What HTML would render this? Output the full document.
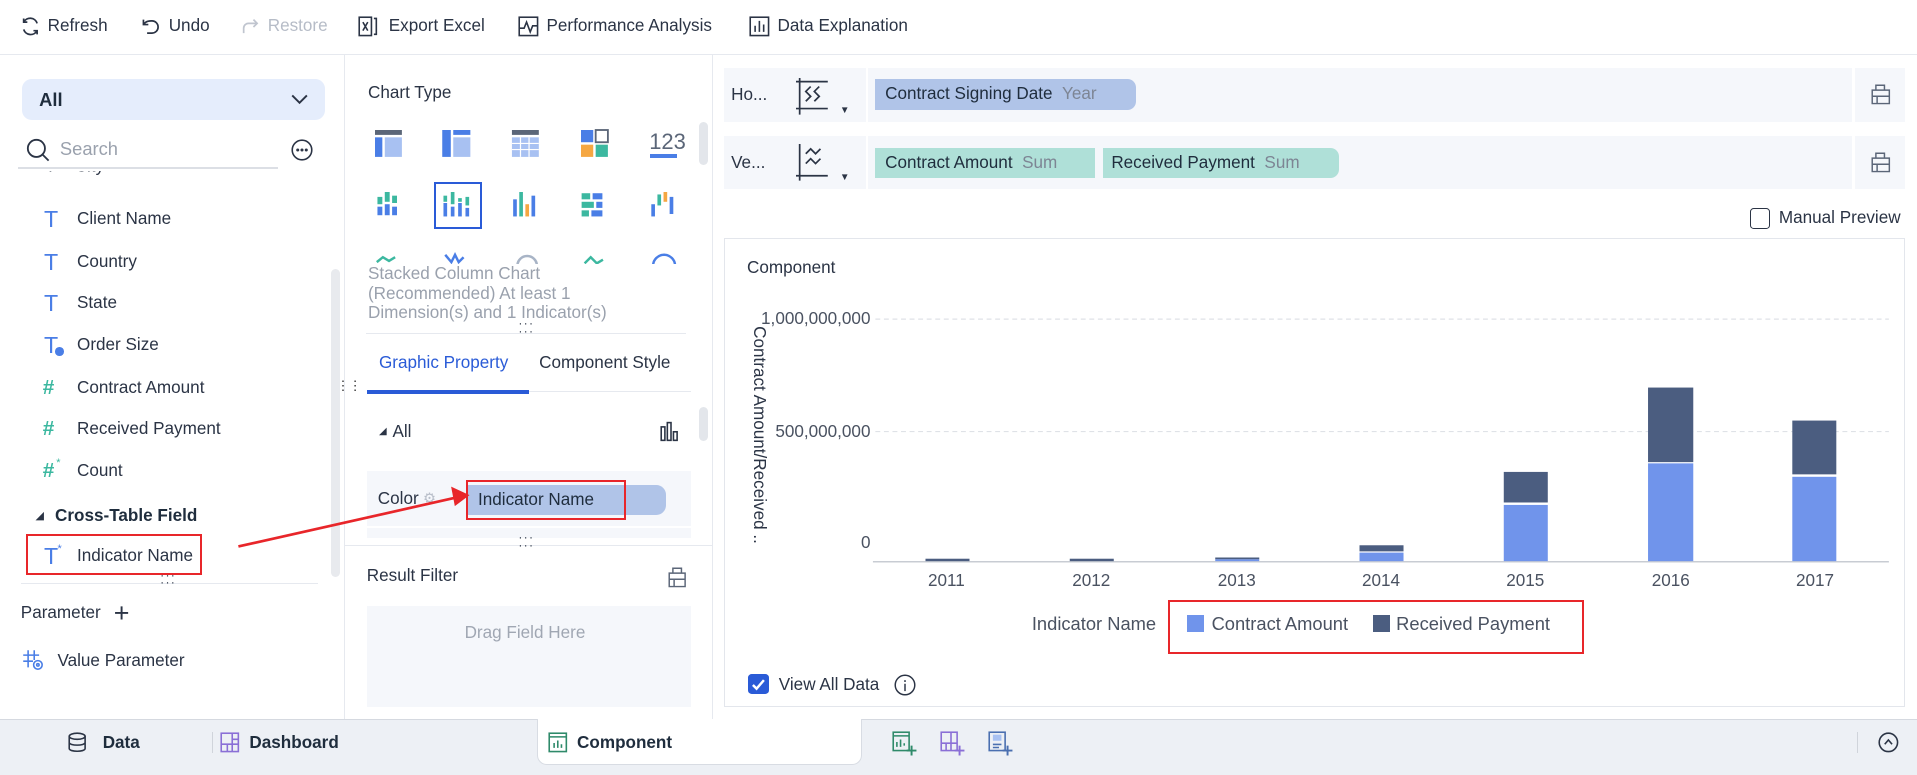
<!DOCTYPE html>
<html><head><meta charset="utf-8"><style>
*{box-sizing:border-box;margin:0;padding:0}
html,body{width:1917px;height:775px;overflow:hidden;background:#fff}
#w{zoom:1.22258;width:1568px;height:634px;position:relative;font-family:"Liberation Sans",sans-serif;font-size:14px;color:#2b3445}
.a{position:absolute;white-space:nowrap}
.t{line-height:18px;transform:translateY(-9px)}
svg{position:absolute;overflow:visible}
.gray{color:#8a93a3}
</style></head><body><div id="w">
<!-- toolbar -->
<div class="a" style="left:0;top:44px;width:1568px;height:1px;background:#e6e9ef"></div>
<svg style="left:16px;top:13px" width="17" height="17" viewBox="0 0 17 17" fill="none" stroke="#2b3445" stroke-width="1.4"><path d="M14 6A6 6 0 0 0 3 5M3 2v3h3M3 11a6 6 0 0 0 11 1M14 15v-3h-3"/></svg>
<div class="a t" style="left:39px;top:21px">Refresh</div>
<svg style="left:115px;top:13px" width="17" height="17" viewBox="0 0 17 17" fill="none" stroke="#2b3445" stroke-width="1.4"><path d="M2 3v4h4M2 7c2-3 5-3 7-3a5 5 0 0 1 0 10H5"/></svg>
<div class="a t" style="left:138px;top:21px">Undo</div>
<svg style="left:196px;top:13px" width="17" height="17" viewBox="0 0 17 17" fill="none" stroke="#c0c5cf" stroke-width="1.4"><path d="M11 3l3 3-3 3M14 6H7a4 4 0 0 0-4 4v4"/></svg>
<div class="a t" style="left:219px;top:21px;color:#b6bcc7">Restore</div>
<svg style="left:293px;top:13px" width="16" height="17" viewBox="0 0 16 17" fill="none" stroke="#2b3445" stroke-width="1.3"><rect x="1" y="1" width="10" height="15"/><path d="M13 2h2v13h-2M4 5l4 7M8 5l-4 7"/></svg>
<div class="a t" style="left:318px;top:21px">Export Excel</div>
<svg style="left:424px;top:13px" width="17" height="17" viewBox="0 0 17 17" fill="none" stroke="#2b3445" stroke-width="1.3"><rect x="1" y="1" width="15" height="15"/><path d="M1 10l4 0 2-5 3 8 2-5 4 0"/></svg>
<div class="a t" style="left:447px;top:21px">Performance Analysis</div>
<svg style="left:613px;top:13px" width="17" height="17" viewBox="0 0 17 17" fill="none" stroke="#2b3445" stroke-width="1.3"><rect x="1" y="1" width="15" height="15"/><path d="M5 13V8M8.5 13V4M12 13V7"/></svg>
<div class="a t" style="left:636px;top:21px">Data Explanation</div>

<!-- left panel -->
<div class="a" style="left:281px;top:45px;width:1px;height:543px;background:#e6e9ef"></div>
<div class="a" style="left:18px;top:65px;width:248px;height:33px;background:#e5edfc;border-radius:8px"></div>
<div class="a t" style="left:32px;top:82px;font-weight:bold;font-size:15px;color:#1f2d3d">All</div>
<svg style="left:238px;top:76px" width="14" height="10" viewBox="0 0 14 10" fill="none" stroke="#2b3445" stroke-width="1.6"><path d="M1 2l6 6 6-6"/></svg>
<svg style="left:21px;top:113px" width="20" height="20" viewBox="0 0 20 20" fill="none" stroke="#2b3445" stroke-width="1.5"><circle cx="8.5" cy="8.5" r="7"/><path d="M13.5 13.5l5 5"/></svg>
<div class="a t gray" style="left:49px;top:122px;font-size:15px;color:#9aa1ad">Search</div>
<div class="a" style="left:15px;top:137px;width:212px;height:1px;background:#dcdfe5"></div>
<svg style="left:238px;top:114px" width="18" height="18" viewBox="0 0 18 18" fill="none" stroke="#2b3445" stroke-width="1.3"><circle cx="9" cy="9" r="8"/><circle cx="5.5" cy="9" r=".6" fill="#2b3445"/><circle cx="9" cy="9" r=".6" fill="#2b3445"/><circle cx="12.5" cy="9" r=".6" fill="#2b3445"/></svg>
<div class="a" style="left:37px;top:140px;width:140px;height:8px;overflow:hidden"><div style="color:#2b3445;font-size:14px;transform:translateY(-12px)">T&nbsp;&nbsp;&nbsp;&nbsp;City</div></div>
<div class="a" style="left:271px;top:220px;width:7px;height:252px;background:#e8eaee;border-radius:4px"></div>
<div class="a t" style="left:275px;top:316px;font-size:11px;letter-spacing:-1px;color:#333">⋮⋮</div>
<!-- fields -->
<div class="a t" style="left:36px;top:179px;color:#4a7ee6;font-size:19px">T</div><div class="a t" style="left:63px;top:179px">Client Name</div>
<div class="a t" style="left:36px;top:214px;color:#4a7ee6;font-size:19px">T</div><div class="a t" style="left:63px;top:214px">Country</div>
<div class="a t" style="left:36px;top:248px;color:#4a7ee6;font-size:19px">T</div><div class="a t" style="left:63px;top:248px">State</div>
<div class="a t" style="left:36px;top:282px;color:#4a7ee6;font-size:19px">T</div><div class="a" style="left:45px;top:284px;width:7px;height:7px;border-radius:50%;background:#4a7ee6"></div><div class="a t" style="left:63px;top:282px">Order Size</div>
<div class="a t" style="left:35px;top:317px;color:#3cb8a0;font-size:17px;font-weight:bold">#</div><div class="a t" style="left:63px;top:317px">Contract Amount</div>
<div class="a t" style="left:35px;top:351px;color:#3cb8a0;font-size:17px;font-weight:bold">#</div><div class="a t" style="left:63px;top:351px">Received Payment</div>
<div class="a t" style="left:35px;top:385px;color:#3cb8a0;font-size:17px;font-weight:bold">#</div><div class="a t" style="left:46px;top:379px;color:#3cb8a0;font-size:9px">*</div><div class="a t" style="left:63px;top:385px">Count</div>
<div class="a t" style="left:29px;top:422px;font-size:9px">◢</div>
<div class="a t" style="left:45px;top:422px;font-weight:bold;color:#1f2d3d">Cross-Table Field</div>
<div class="a t" style="left:36px;top:455px;color:#4a7ee6;font-size:19px">T</div><div class="a t" style="left:47px;top:449px;color:#4a7ee6;font-size:9px">*</div>
<div class="a t" style="left:63px;top:455px">Indicator Name</div>
<div class="a" style="left:21px;top:437px;width:144px;height:33px;border:2px solid #e8262a"></div>
<div class="a" style="left:17px;top:477px;width:243px;height:1px;background:#e6e9ef"></div>
<div class="a t" style="left:131px;top:477px;font-size:10px;line-height:6px;letter-spacing:1px">···<br>···</div>
<div class="a t" style="left:17px;top:501px">Parameter</div>
<div class="a t" style="left:93px;top:501px;font-size:22px;font-weight:300">+</div>
<svg style="left:18px;top:531px" width="18" height="18" viewBox="0 0 18 18" fill="none" stroke="#4a7ee6" stroke-width="1.3"><path d="M5 1v14M10 1v8M1 5h13M1 10h8"/><circle cx="13" cy="13" r="3.5"/><circle cx="13" cy="13" r="1"/></svg>
<div class="a t" style="left:47px;top:541px">Value Parameter</div>

<!-- middle panel -->
<div class="a" style="left:582px;top:45px;width:1px;height:543px;background:#e6e9ef"></div>
<div class="a t" style="left:301px;top:76px">Chart Type</div>
<div class="a" style="left:572px;top:100px;width:7px;height:35px;background:#e3e6eb;border-radius:4px"></div>
<!-- row1 -->
<svg style="left:307px;top:106px" width="180" height="24">
<rect x="0" y="0" width="22" height="4" fill="#5b6678"/><rect x="0" y="6" width="6" height="16" fill="#4a7ee6"/><rect x="8" y="6" width="14" height="16" fill="#a8c1f2"/>
<rect x="55" y="0" width="7" height="22" fill="#4a7ee6"/><rect x="64" y="0" width="14" height="4" fill="#4a7ee6"/><rect x="64" y="6" width="14" height="16" fill="#a8c1f2"/>
<rect x="112" y="0" width="22" height="4" fill="#5b6678"/><rect x="112" y="6" width="22" height="16" fill="#a8c1f2"/><path d="M112 11h22M112 16h22M119 6v16M126 6v16" stroke="#fff"/>
</svg>
<svg style="left:475px;top:106px" width="24" height="24"><rect x="0" y="0" width="10" height="10" fill="#4a7ee6"/><rect x="12" y="0" width="10" height="10" fill="none" stroke="#5b6678" stroke-width="1.5"/><rect x="0" y="12" width="10" height="10" fill="#f5a742"/><rect x="12" y="12" width="10" height="10" fill="#3cb8a0"/></svg>
<div class="a t" style="left:531px;top:116px;font-size:18px;color:#5b6678">123</div>
<div class="a" style="left:532px;top:126px;width:22px;height:3px;background:#4a7ee6"></div>
<!-- row2 -->
<svg style="left:307px;top:157px" width="240" height="24">
<g fill="#4a7ee6"><rect x="2" y="12" width="4" height="7"/><rect x="8" y="10" width="4" height="9"/><rect x="14" y="12" width="4" height="7"/></g>
<g fill="#3cb8a0"><rect x="2" y="4" width="4" height="6"/><rect x="8" y="0" width="4" height="8"/><rect x="14" y="3" width="4" height="6"/></g>
<g fill="#4a7ee6"><rect x="56" y="9" width="3" height="11"/><rect x="62" y="12" width="3" height="8"/><rect x="68" y="9" width="3" height="11"/><rect x="74" y="13" width="3" height="7"/></g>
<g fill="#3cb8a0"><rect x="56" y="3" width="3" height="5"/><rect x="62" y="0" width="3" height="10"/><rect x="68" y="5" width="3" height="3"/><rect x="74" y="4" width="3" height="7"/></g>
<rect x="113" y="6" width="3" height="14" fill="#4a7ee6"/><rect x="118" y="0" width="3" height="20" fill="#3cb8a0"/><rect x="123" y="10" width="3" height="10" fill="#f5a742"/><rect x="128" y="3" width="3" height="17" fill="#4a7ee6"/>
<g fill="#3cb8a0"><rect x="169" y="1" width="7" height="5"/><rect x="169" y="8" width="10" height="5"/><rect x="169" y="15" width="6" height="5"/></g><g fill="#4a7ee6"><rect x="178" y="1" width="8" height="5"/><rect x="181" y="8" width="5" height="5"/><rect x="177" y="15" width="9" height="5"/></g>
<rect x="226" y="10" width="3" height="10" fill="#4a7ee6"/><rect x="231" y="2" width="3" height="9" fill="#3cb8a0"/><rect x="236" y="0" width="3" height="8" fill="#f5a742"/><rect x="241" y="4" width="3" height="14" fill="#4a7ee6"/>
</svg>
<div class="a" style="left:355px;top:149px;width:39px;height:38px;border:2px solid #2a5bd7"></div>
<!-- row3 partial -->
<div class="a" style="left:300px;top:200px;width:265px;height:16px;overflow:hidden">
<svg style="left:0;top:0" width="265" height="20" fill="none" stroke-width="2">
<path d="M8 14l5-4 5 3 5-3" stroke="#3cb8a0"/><path d="M64 8l5 6 3-6 3 6 4-4" stroke="#4a7ee6"/><circle cx="131" cy="17" r="8" stroke="#a8b4c6"/><path d="M178 15l5-5 5 5 5-3" stroke="#3cb8a0"/><path d="M234 17a9 9 0 0 1 18 0" stroke="#4a7ee6"/></svg></div>
<div class="a" style="left:301px;top:216px;font-size:14px;line-height:16px;color:#9aa1ad;white-space:normal;width:215px">Stacked Column Chart (Recommended) At least 1 Dimension(s) and 1 Indicator(s)</div>
<div class="a" style="left:299px;top:272px;width:262px;height:1px;background:#e6e9ef"></div>
<div class="a t" style="left:424px;top:271px;font-size:10px;line-height:6px;letter-spacing:1px">···<br>···</div>
<div class="a t" style="left:310px;top:297px;color:#2a5bd7">Graphic Property</div>
<div class="a t" style="left:441px;top:297px">Component Style</div>
<div class="a" style="left:300px;top:320px;width:265px;height:1px;background:#e6e9ef"></div>
<div class="a" style="left:300px;top:319px;width:133px;height:3px;background:#2a5bd7"></div>
<div class="a" style="left:572px;top:333px;width:7px;height:28px;background:#e3e6eb;border-radius:4px"></div>
<div class="a t" style="left:310px;top:353px;font-size:8px">◢</div>
<div class="a t" style="left:321px;top:353px">All</div>
<svg style="left:540px;top:345px" width="15" height="16" fill="none" stroke="#2b3445" stroke-width="1.3"><rect x="1" y="4" width="3" height="11"/><rect x="6" y="0.5" width="3" height="14.5"/><rect x="11" y="8" width="3" height="7"/></svg>
<div class="a" style="left:300px;top:385px;width:265px;height:45px;background:#f5f7fb"></div>
<div class="a" style="left:300px;top:432px;width:265px;height:8px;background:#f5f7fb"></div>
<div class="a t" style="left:309px;top:408px">Color</div>
<div class="a t" style="left:346px;top:408px;color:#b8bec9;font-size:12px">⚙</div>
<div class="a" style="left:383px;top:397px;width:162px;height:24px;background:#b0c4e8;border-radius:0 8px 8px 0"></div>
<div class="a t" style="left:391px;top:409px;color:#1f2d3d">Indicator Name</div>
<div class="a" style="left:381px;top:393px;width:131px;height:32px;border:2px solid #e8262a"></div>
<div class="a" style="left:282px;top:446px;width:300px;height:1px;background:#e6e9ef"></div>
<div class="a t" style="left:424px;top:446px;font-size:10px;line-height:6px;letter-spacing:1px">···<br>···</div>
<div class="a t" style="left:300px;top:471px">Result Filter</div>
<svg style="left:546px;top:464px" width="15" height="17" fill="none" stroke="#5b6678" stroke-width="1.2"><path d="M4 5V1h7v4M1 5h13v11H1zM1 10h13M5 10v6"/></svg>
<div class="a" style="left:300px;top:496px;width:265px;height:82px;background:#f5f7fb"></div>
<div class="a t" style="left:380px;top:518px;color:#a0a7b3">Drag Field Here</div>

<!-- red arrow -->
<svg style="left:0;top:0" width="600" height="500"><path d="M195 447L373 407" stroke="#e8262a" stroke-width="2.2"/><path d="M384 405l-15-7 3 16z" fill="#e8262a"/></svg>

<!-- right panel -->
<div class="a" style="left:592px;top:56px;width:923px;height:44px;background:#f5f7fb"></div>
<div class="a" style="left:1517px;top:56px;width:41px;height:44px;background:#f5f7fb"></div>
<div class="a" style="left:708px;top:56px;width:2px;height:44px;background:#fff"></div>
<div class="a t" style="left:598px;top:78px">Ho...</div>
<svg style="left:651px;top:64px" width="26" height="30" fill="none" stroke="#2b3445" stroke-width="1.4"><path d="M3 0v30M0 3h26M0 25h26M12 7l-4 4 4 4-4 4M19 7l-4 4 4 4-4 4"/></svg>
<div class="a t" style="left:687px;top:91px;font-size:8px">▼</div>
<div class="a" style="left:716px;top:65px;width:213px;height:25px;background:#b0c4e8;border-radius:0 7px 7px 0"></div>
<div class="a t" style="left:724px;top:77px;color:#1f2d3d">Contract Signing Date <span style="color:#7d8594">&nbsp;Year</span></div>
<svg style="left:1530px;top:69px" width="17" height="17" fill="none" stroke="#5b6678" stroke-width="1.2"><path d="M4 5V1h7v4M1 5h14v11H1zM1 10h14M5 10v6"/></svg>

<div class="a" style="left:592px;top:111px;width:923px;height:44px;background:#f5f7fb"></div>
<div class="a" style="left:1517px;top:111px;width:41px;height:44px;background:#f5f7fb"></div>
<div class="a" style="left:708px;top:111px;width:2px;height:44px;background:#fff"></div>
<div class="a t" style="left:598px;top:133px">Ve...</div>
<svg style="left:651px;top:118px" width="26" height="30" fill="none" stroke="#2b3445" stroke-width="1.4"><path d="M3 0v30M0 26h26M8 8l4-4 4 4 4-4M8 16l4-4 4 4 4-4"/></svg>
<div class="a t" style="left:687px;top:146px;font-size:8px">▼</div>
<div class="a" style="left:716px;top:121px;width:180px;height:25px;background:#afe0d8"></div>
<div class="a t" style="left:724px;top:133px;color:#1f2d3d">Contract Amount <span style="color:#7d8594">&nbsp;Sum</span></div>
<div class="a" style="left:902px;top:121px;width:193px;height:25px;background:#afe0d8;border-radius:0 7px 7px 0"></div>
<div class="a t" style="left:909px;top:133px;color:#1f2d3d">Received Payment <span style="color:#7d8594">&nbsp;Sum</span></div>
<svg style="left:1530px;top:124px" width="17" height="17" fill="none" stroke="#5b6678" stroke-width="1.2"><path d="M4 5V1h7v4M1 5h14v11H1zM1 10h14M5 10v6"/></svg>

<div class="a" style="left:1431px;top:170px;width:17px;height:17px;border:1.3px solid #2b3445;border-radius:3px"></div>
<div class="a t" style="left:1455px;top:178px">Manual Preview</div>

<!-- chart card -->
<div class="a" style="left:592px;top:195px;width:966px;height:383px;border:1px solid #e3e6ec"></div>
<div class="a t" style="left:611px;top:219px">Component</div>
<div class="a" style="left:612px;top:356px;width:0;height:0"><div style="position:absolute;white-space:nowrap;transform:translate(-50%,-50%) rotate(90deg);left:9px;top:0;font-size:14px;color:#2b3445">Contract Amount/Received ..</div></div>
<div class="a t" style="left:612px;top:261px;width:100px;text-align:right;color:#4a5261">1,000,000,000</div>
<div class="a t" style="left:612px;top:353px;width:100px;text-align:right;color:#4a5261">500,000,000</div>
<div class="a t" style="left:612px;top:444px;width:100px;text-align:right;color:#4a5261">0</div>
<svg style="left:0;top:0" width="1568" height="634">
<path d="M716 261H1545M716 353H1545" stroke="#dfe2e7" stroke-dasharray="4 3"/>
<path d="M714 459.5H1545" stroke="#c8ccd3" stroke-width="1.2"/>
<g fill="#4b5d80"><rect x="757" y="457" width="36" height="2"/><rect x="875" y="457" width="36" height="2"/><rect x="994" y="456" width="36" height="1.5"/><rect x="1112" y="446" width="36" height="5"/><rect x="1230" y="386" width="36" height="25"/><rect x="1348" y="317" width="37" height="61"/><rect x="1466" y="344" width="36" height="44"/></g>
<g fill="#7094eb"><rect x="994" y="457.5" width="36" height="1.5"/><rect x="1112" y="452" width="36" height="7"/><rect x="1230" y="413" width="36" height="46"/><rect x="1348" y="379" width="37" height="80"/><rect x="1466" y="390" width="36" height="69"/></g>
</svg>
<div class="a t" style="left:759px;top:475px;color:#4a5261">2011</div>
<div class="a t" style="left:877px;top:475px;color:#4a5261">2012</div>
<div class="a t" style="left:996px;top:475px;color:#4a5261">2013</div>
<div class="a t" style="left:1114px;top:475px;color:#4a5261">2014</div>
<div class="a t" style="left:1232px;top:475px;color:#4a5261">2015</div>
<div class="a t" style="left:1351px;top:475px;color:#4a5261">2016</div>
<div class="a t" style="left:1469px;top:475px;color:#4a5261">2017</div>
<div class="a t" style="left:844px;top:510px;font-size:15px;color:#4a5261">Indicator Name</div>
<div class="a" style="left:971px;top:503px;width:14px;height:14px;background:#7094eb"></div>
<div class="a t" style="left:991px;top:510px;font-size:15px;color:#4a5261">Contract Amount</div>
<div class="a" style="left:1123px;top:503px;width:14px;height:14px;background:#4b5d80"></div>
<div class="a t" style="left:1142px;top:510px;font-size:15px;color:#4a5261">Received Payment</div>
<div class="a" style="left:955px;top:491px;width:341px;height:44px;border:2px solid #e8262a"></div>
<div class="a" style="left:612px;top:551px;width:17px;height:17px;background:#2a5bd7;border-radius:3px"></div>
<svg style="left:612px;top:551px" width="17" height="17" fill="none" stroke="#fff" stroke-width="2"><path d="M4 9l3 3 6-7"/></svg>
<div class="a t" style="left:637px;top:560px">View All Data</div>
<svg style="left:731px;top:551px" width="18" height="18" fill="none" stroke="#2b3445" stroke-width="1.2"><circle cx="9" cy="9" r="8"/><path d="M9 8v6M9 5v1.5"/></svg>

<!-- bottom bar -->
<div class="a" style="left:0;top:588px;width:1568px;height:46px;background:#edf0f5;border-top:1.5px solid #d5d9e0"></div>
<div class="a" style="left:439px;top:588px;width:266px;height:38px;background:#fff;border:1px solid #d8dce3;border-top:none;border-radius:0 0 8px 8px"></div>
<svg style="left:56px;top:599px" width="15" height="17" fill="none" stroke="#2b3445" stroke-width="1.3"><ellipse cx="7.5" cy="3.5" rx="6.5" ry="2.5"/><path d="M1 3.5v10c0 3 13 3 13 0v-10M1 8.5c0 3 13 3 13 0"/></svg>
<div class="a t" style="left:84px;top:608px;font-weight:bold;color:#1f2d3d">Data</div>
<div class="a" style="left:173px;top:599px;width:1px;height:17px;background:#d0d4db"></div>
<svg style="left:180px;top:599px" width="16" height="17" fill="none" stroke="#8a6fd6" stroke-width="1.3"><rect x="1" y="1" width="14" height="15"/><path d="M1 10h14M6 10v6M10 1v15M10 6h5"/></svg>
<div class="a t" style="left:204px;top:608px;font-weight:bold;color:#1f2d3d">Dashboard</div>
<svg style="left:448px;top:599px" width="16" height="17" fill="none" stroke="#2f8a6a" stroke-width="1.3"><rect x="1" y="1" width="14" height="15"/><path d="M1 4h14M5 13V9M8 13V7M11 13V10"/></svg>
<div class="a t" style="left:472px;top:608px;font-weight:bold;color:#1f2d3d">Component</div>
<svg style="left:730px;top:598px" width="20" height="20" fill="none" stroke-width="1.3"><rect x="1" y="1" width="13" height="15" stroke="#2f8a6a"/><path d="M1 4h13M4 13V9M7 13V7M10 12V10" stroke="#2f8a6a"/><path d="M16 12v8M12 16h8" stroke="#2f8a6a" stroke-width="1.6"/></svg>
<svg style="left:769px;top:598px" width="20" height="20" fill="none" stroke="#8a6fd6" stroke-width="1.3"><rect x="1" y="1" width="13" height="15"/><path d="M1 10h13M5 10v6M9 10v6M9 1v9"/><path d="M16 12v8M12 16h8" stroke-width="1.6"/></svg>
<svg style="left:808px;top:598px" width="20" height="20" fill="none" stroke="#4a6fb0" stroke-width="1.3"><rect x="1" y="1" width="13" height="15"/><rect x="4" y="3" width="7" height="5" fill="#a8c1f2" stroke="none"/><path d="M4 11h7M4 13.5h5"/><path d="M16 12v8M12 16h8" stroke-width="1.6"/></svg>
<div class="a" style="left:1519px;top:599px;width:1px;height:17px;background:#d0d4db"></div>
<svg style="left:1536px;top:599px" width="17" height="17" fill="none" stroke="#2b3445" stroke-width="1.3"><circle cx="8.5" cy="8.5" r="7.5"/><path d="M5.5 10l3-3.5 3 3.5"/></svg>
</div></body></html>
